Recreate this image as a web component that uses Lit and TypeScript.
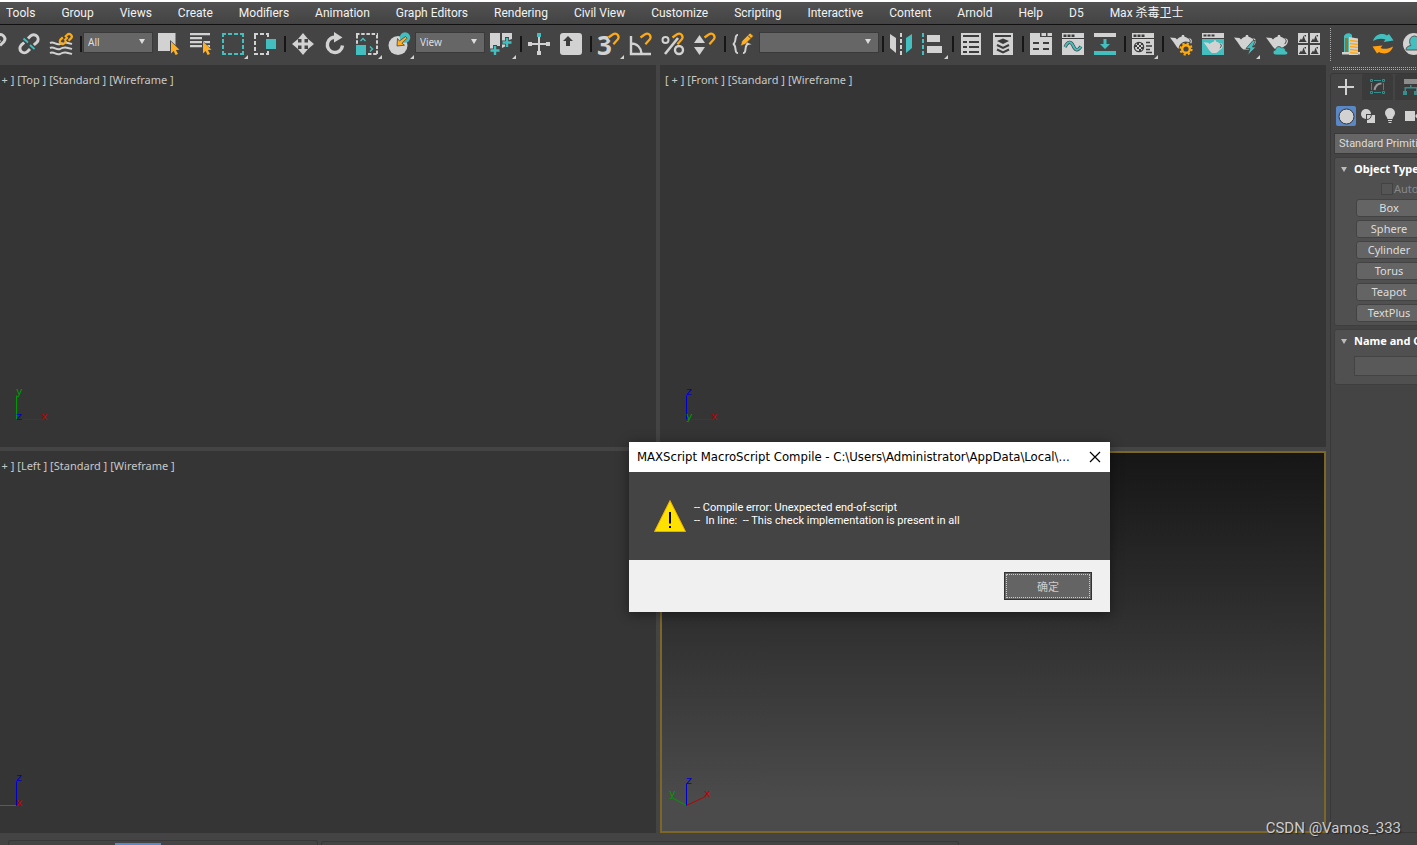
import { LitElement, html, svg, css, TemplateResult, SVGTemplateResult } from "lit";
import { customElement, property } from "lit/decorators.js";

const corner = svg`<path class="l" d="M30 27v4h-4z"/>`;
const cursor = svg`<path class="o" d="M17 13.5l8.5 8.2-3.6.2 2.1 4-2.4 1.1-2-4.1-2.6 2.5z"/>`;
const magnet = svg`<path class="so" stroke-width="2.2" d="M14.5 9.5l4.2-3c4.300-2.600 7.600 2.200 4.700 5.300l-4 4.400"/>`;
const teapot = svg`<path class="l" d="M4 9.500l5.500.5 1.500 1.500c1.500-1.800 3-2.500 4.500-2.700l.5-1.800h2l.5 1.800c1.500.3 2.800.9 3.800 1.900 2.800-.8 4.200 1.300 3.400 3.900-.6 2-2 3.300-3.700 3.900-1.200 1.600-2.500 2.500-3.500 3h-5c-3.500-2.500-4.500-6-9.500-12z"/><path class="sd" stroke-width="1" d="M23 11.500c1.800-.2 1.500 3.200-.4 4.600"/>`;
const picture = (x: number, y: number) => svg`<path class="l" d="M${x} ${y}h10v10h-10z"/><path class="d" d="M${x + 1} ${y + 8.500}l2-3 1 1.500 1.500-4.500 2 5 1 1v.5h-7.500zM${x + 6.500} ${y + 2}h1.500v1.500h-1.500z"/>`;

const ICONS: Record<string, SVGTemplateResult> = {
  link: svg`<path class="sl" stroke-width="3" d="M12 11l4-3.500a4.300 4.300 0 0 1 6 6l-4 4M17 21l-4 3a4.300 4.300 0 0 1-6-6l3-3M11 19l7-7"/>`,
  unlink: svg`<path class="sl" stroke-width="3" d="M14 10.500l2.500-2.500a4.400 4.400 0 0 1 6.300 6.300l-3 2.700M16 21l-2.500 2.500a4.400 4.400 0 0 1-6.300-6.300l3-2.700"/><path class="st" stroke-width="1.800" d="M9.500 10.500l4.500 4M16 17l4.500 4.200"/>`,
  bind: svg`<path class="sl" stroke-width="2" d="M4 15c4-2 6 2.500 10 1 4-2.500 7-1.500 12 0M4 20c4-2 6 2.500 10 1 4-2.500 7-1.500 12 0M4 25c4-2 6 2.500 10 1 4-2.500 7-1.500 12 0"/><path stroke="#444" stroke-width="6" d="M16 14l6-7"/><path class="so" stroke-width="2.200" d="M19 9l2.200-2.200a2.600 2.600 0 0 1 3.800 3.600l-2.500 2.300M20.500 12.800l-2.200 2.400a2.600 2.600 0 0 1-3.800-3.600l2.300-2.200M18.300 12.500l3.400-3.200"/>`,
  select: svg`<path class="l" d="M4 5h17.500v18h-17.500z"/><path class="g" d="M16 12l11 10-3 1 1 5h-3l-2-2-4 2z"/>${cursor}`,
  byName: svg`<path class="l" d="M4 5h20v2.300h-20zM4 9h12v2.300h-12zM4 13h20v2.300h-20zM4 17h20v2.300h-20z"/><path class="g" d="M16 12l9 9v6h-5l-4 0z"/>${cursor}`,
  region: svg`<path class="st" stroke-width="2" stroke-dasharray="4 2" d="M4 6h22M4 26h22M5 5v22M25 5v22"/>${corner}`,
  crossing: svg`<path class="sl" stroke-width="2" stroke-dasharray="4 2" d="M4 6h15M4 26h15M5 7v20M18 5v4M18 23v4"/><path class="t" d="M16 11h10v10h-10z"/>`,
  move: svg`<path class="l" d="M15 5l5 6h-3.500v3.500H20V11l6 5-6 5v-3.500h-3.500V21H20l-5 6-5-6h3.500v-3.500H10V21l-6-5 6-5v3.500h3.500V11H10z"/>`,
  rotate: svg`<path class="sl" stroke-width="3.400" d="M17 9.500a7.600 7.600 0 1 0 5.500 8"/><path class="l" d="M14 4l8.500 5.500-8.500 5z"/>`,
  scale: svg`<path class="sl" stroke-width="2" stroke-dasharray="3.500 1.700" d="M4 6h22M25 7v20M5 7v9M16 26h9"/><path class="t" d="M4 17h10v10h-10z"/><path class="st" stroke-width="1.500" d="M8.500 13l2.500-2.500 2.500 2.500M18 18.500l2.500 2.500-2.500 2.500"/>${corner}`,
  place: svg`<circle class="l" cx="14" cy="17.500" r="9.500"/><circle class="t" cx="21" cy="9.500" r="5.200"/><path class="o" stroke="#444" stroke-width=".8" d="M21.500 8.500l1.500 1.700-5 5 2.500 2-7.500.8.500-7.500 2 2.500z"/>${corner}`,
  pivot: svg`<path class="l" d="M4 5h10v13h-4l-3 4h-3zM16 5h10v6l-3 1-3 6-4 2z"/><path stroke="#444" stroke-width="4" d="M9 17v11M3 22.500h12M21 9v11M15 14.500h12"/><path class="st" stroke-width="2.400" d="M9 18v9M4.500 22.500h9M21 10v9M16.500 14.500h9"/>${corner}`,
  manipulate: svg`<path class="sl" stroke-width="2" d="M15 9v15M5 16h20"/><path class="l" d="M4 14h4v4h-4zM22 14h4v4h-4zM13 23h4v4h-4z"/><path class="t" d="M13 5h4v4h-4z"/>`,
  keyboard: svg`<rect class="l" x="4" y="5" width="22" height="22" rx="3"/><path class="d" d="M12 8l5 5h-3v5h-4v-5h-3z"/>`,
  snap: svg`<text class="glyph" x="3" y="27">3</text><path stroke="#444" stroke-width="4" fill="none" d="M15 11l5-3.500M18 16l4-4"/>${magnet}${corner}`,
  angle: svg`<path class="sl" stroke-width="2.400" d="M5 8v18h20M5 15.500c6 0 10 4 10.500 10"/>${magnet}`,
  percent: svg`<circle class="sl" stroke-width="2" cx="7.500" cy="12" r="3"/><circle class="sl" stroke-width="2.400" cx="21" cy="22" r="4"/><path class="sl" stroke-width="2.600" d="M7 26L20 10"/>${magnet}`,
  spinner: svg`<path class="l" d="M9.500 7l5.500 8h-11zM4 19h11l-5.500 8z"/>${magnet}`,
  edit: svg`<path class="sl" stroke-width="2" d="M10 7c-4-.5-1 8-5 9 4 1 1 9.500 5 9M15 25c4 .5 1-8 5-9-3-1-2-3-2-5"/><path class="o" stroke="#444" stroke-width=".6" d="M12.500 18l1.500-5 8-8 3.500 3-8 8z"/><path class="sd" d="M20 7.500l3 3"/>`,
  mirror: svg`<path class="l" d="M4 6l6 4v15l-6-5z"/><path class="t" d="M26 6l-6 4v15l6-5z"/><path class="sl" stroke-width="2" stroke-dasharray="4 2" d="M15 5v22"/>`,
  align: svg`<path class="st" stroke-width="2" stroke-dasharray="4 2" d="M5 5v22"/><path class="l" d="M9 7h13v7h-13zM9 18h15v7h-15z"/>${corner}`,
  sceneList: svg`<path class="l" d="M5 5h20v22h-20z"/><path class="sd" stroke-width="2" d="M7 8h16M7 14h4M13 14h10M7 19h4M13 19h10M7 24h4M13 24h10"/>`,
  layers: svg`<path class="l" d="M5 5h20v22h-20z"/><path class="sd" stroke-width="2" d="M7 8h16"/><path class="d" d="M15 10.500l6 2.500-6 3-6-3z"/><path class="sd" stroke-width="2" d="M9 17l6 3 6-3M9 21.500l6 3 6-3"/>`,
  ribbon: svg`<path class="l" d="M4 5h10v4h12v18h-22zM15.500 5h4.500v3h-4.500zM21.500 5h4.500v3h-4.500z"/><path class="sd" stroke-width="2" d="M7 15h6M17 15h6M7 21h6M17 21h6"/>`,
  curve: svg`<path class="l" d="M4 5h22v22h-22z"/><path class="d" d="M5.500 6.500h3v2.500h-3zM9.500 6.500h3v2.500h-3zM13.500 6.500h3v2.500h-3zM4 10h22v1h-22z"/><path class="sd" stroke-width="3.200" d="M7 19c3-6 6-6 8-1.500s4 6.500 8 1"/><path class="st" stroke-width="2" d="M7 19c3-6 6-6 8-1.500s4 6.500 8 1"/>`,
  schematic: svg`<path class="l" d="M4 5h22v4h-22z"/><path class="t" d="M4 23h22v4h-22zM13.500 11h3v5h3.500l-5 5-5-5h3.500z"/>`,
  material: svg`<path class="l" d="M4 5h22v22h-22z"/><path class="d" d="M5.500 6.500h3v2.500h-3zM9.500 6.500h3v2.500h-3zM13.500 6.500h3v2.500h-3zM4 10h22v1h-22z"/><circle class="sd" cx="11" cy="19" r="4.600" stroke-width="1.300"/><path class="d" d="M9 15h2v2h-2zM13 15h2v2h-2zM11 17h2v2h-2zM7 17h2v2h-2zM9 19h2v2h-2zM13 19h2v2h-2zM11 21h2v2h-2z"/><path class="sd" stroke-width="1.600" d="M18 14.500h4M18 18h6M18 21.500h4M18 24.500h6"/>${corner}`,
  renderSetup: svg`${teapot}<circle cx="20" cy="21" r="7.500" fill="#444"/><circle class="so" cx="20" cy="21" r="3.800" stroke-width="2.400"/><circle class="so" cx="20" cy="21" r="5.600" stroke-width="2" stroke-dasharray="2.200 2.200"/>`,
  frame: svg`<path class="l" d="M4 5h22v5h-22z"/><path class="d" d="M5.500 6.500h3v2h-3zM9.500 6.500h3v2h-3zM13.500 6.500h3v2h-3z"/><path class="t" d="M4 11h22v16h-22z"/><g transform="translate(2 6) scale(.88)">${teapot}</g>`,
  render: svg`${teapot}<path class="t" stroke="#444" stroke-width=".8" d="M23 12.500l-7 8h4l-2.500 7 8.500-8.500h-3.500l3-6.500z"/>${corner}`,
  cloud: svg`${teapot}<path class="t" stroke="#444" stroke-width=".8" d="M14 27c-4-.5-3.500-5-.5-5 .2-3.500 4.500-4.500 6-2 3-1 4 1 4 3 3 .2 3 4-.5 4z"/>`,
  gallery: svg`${picture(4, 5)}${picture(16, 5)}${picture(4, 17)}${picture(16, 17)}`,
  building: svg`<path class="t" d="M9 8c1-3 6-4 8-1v19h-8z"/><path fill="#8a7a35" d="M10 10h3v16h-3z"/><path class="l" d="M14 9l9 1.500v16.500h-9zM7 24h18v2.500h-18z"/><path stroke="#ffa81c" stroke-width="1.600" d="M15 12.500l8 1M15 15.500l8 1M15 18.500l8 1M15 21.500l8 1M15 24.500l8 1"/>`,
  sync: svg`<path class="t" d="M6 13c2-7 9-8.500 14-5.500l2-1.500 4.500 6.500-10 1.500 2-2.500c-4-1.500-8-1-12.500 1.500z"/><path class="or" d="M26 18.500c-2 7-9 8.500-14 5.500l-2 1.500-4.500-7 10-1-2 2.500c4 1.500 8 1 12.500-1.500z"/>`,
  account: svg`<circle class="l" cx="15" cy="16" r="11"/><path class="t" stroke="#555" d="M7 22c0-3 2-4 5-4.500-2-2-2.500-9 3.500-9.500 5.500.5 5 7.500 3 9.500 3 .5 5 1.500 5 4.500z"/>`,
};

const MENUS = ["Tools", "Group", "Views", "Create", "Modifiers", "Animation", "Graph Editors", "Rendering", "Civil View", "Customize", "Scripting", "Interactive", "Content", "Arnold", "Help", "D5", "Max 杀毒卫士"];

type Tool = string | { value: string; label: string; wide?: boolean };
const GROUPS: Tool[][] = [
  ["link", "unlink", "bind"],
  [{ value: "All", label: "Selection filter" }, "select", "byName", "region", "crossing"],
  ["move", "rotate", "scale", "place", { value: "View", label: "Reference coordinate system" }, "pivot"],
  ["manipulate", "keyboard"],
  ["snap", "angle", "percent", "spinner"],
  ["edit", { value: "", label: "Named selection sets", wide: true }],
  ["mirror", "align"],
  ["sceneList", "layers"],
  ["ribbon", "curve", "schematic"],
  ["material"],
  ["renderSetup", "frame", "render", "cloud", "gallery"],
];

const base = css`
  * { box-sizing: border-box; }
  button, select, input { font: inherit; color: inherit; margin: 0; border-radius: 0; }
  button { background: none; border: 0; padding: 0; }
  svg { display: block; }
`;

@customElement("menu-bar")
class MenuBar extends LitElement {
  static styles = [base, css`
    :host { display: block; border-top: 2px solid #fff; background: linear-gradient(#525252, #434343); border-bottom: 1px solid #111; }
    .menu { display: flex; gap: 26px; height: 22px; padding-left: 6px; align-items: center; color: #f2f2f2; font: 12px/20px Roboto, "Noto Sans CJK SC", sans-serif; }
    .menu button { white-space: nowrap; }
  `];
  render() {
    return html`<nav class="menu">${MENUS.map((m) => html`<button>${m}</button>`)}</nav>`;
  }
}

@customElement("tool-bar")
class ToolBar extends LitElement {
  static styles = [base, css`
    :host { display: block; overflow: hidden; background: #444; }
    .bar { display: flex; height: 40px; margin-left: -18px; padding-top: 3px; }
    .group { display: flex; flex: none; }
    .group + .group::before { content: ""; width: 2px; height: 16px; margin: 8px 2px 0; background: #161616; }
    .grip { flex: none; width: 3px; height: 34px; margin: 0 3px; background: conic-gradient(#aaa 25%, #444 0) 0 0 / 2px 2px; }
    .tool { width: 32px; height: 32px; }
    .tool svg { overflow: visible; }
    .combo { position: relative; width: 68px; height: 19px; margin: 4px 2px 4px 0; }
    .wide { width: 118px; }
    .combo select { appearance: none; width: 100%; height: 19px; border: 0; outline: 1px solid #3a3a3a; background: #666; padding: 0 4px; color: #ddd; font: 10px/19px "Noto Sans", sans-serif; }
    .combo svg { position: absolute; right: 7px; top: 7px; fill: #ddd; pointer-events: none; }
    .l { fill: #d2d2d2; } .t { fill: #43bfbf; } .o { fill: #ffb022; } .or { fill: #ff9f10; } .d { fill: #3c3c3c; } .g { fill: #444; }
    .sl, .st, .so, .sd { fill: none; }
    .sl { stroke: #d2d2d2; } .st { stroke: #43bfbf; } .so { stroke: #ffab10; } .sd { stroke: #3c3c3c; }
    .glyph { fill: #d2d2d2; font: bold 26px "Noto Sans", sans-serif; }
  `];
  private tool(t: Tool): TemplateResult {
    if (typeof t === "string") {
      return html`<button class="tool" aria-label=${t}><svg width="32" height="32" viewBox="0 0 32 32">${ICONS[t]}</svg></button>`;
    }
    return html`<div class="combo ${t.wide ? "wide" : ""}">
      <select aria-label=${t.label}><option>${t.value}</option></select>
      <svg width="6" height="5" viewBox="0 0 6 5"><path d="M0 0h6l-3 5z"/></svg>
    </div>`;
  }
  render() {
    return html`<div class="bar">
      ${GROUPS.map((g) => html`<div class="group">${g.map((t) => this.tool(t))}</div>`)}
      <div class="grip"></div>
      <div class="group">${["building", "sync", "account"].map((t) => this.tool(t))}</div>
    </div>`;
  }
}

interface Axis { name: string; color: string; dx: number; dy: number; tx: number; ty: number; }
const RED = "#c00000", GREEN = "#009a00", BLUE = "#0000c8";
const AXES: Record<string, Axis[]> = {
  Top: [
    { name: "x", color: RED, dx: 27, dy: 0, tx: 25, ty: 1 },
    { name: "y", color: GREEN, dx: 0, dy: -24, tx: 0, ty: -24 },
    { name: "z", color: BLUE, dx: 0, dy: 0, tx: 0, ty: 1 },
  ],
  Front: [
    { name: "x", color: RED, dx: 27, dy: 0, tx: 25, ty: 1 },
    { name: "z", color: BLUE, dx: 0, dy: -24, tx: 0, ty: -24 },
    { name: "y", color: GREEN, dx: 0, dy: 0, tx: 0, ty: 1 },
  ],
  Left: [
    { name: "", color: GREEN, dx: -24, dy: 0, tx: 0, ty: 0 },
    { name: "z", color: BLUE, dx: 0, dy: -24, tx: 0, ty: -24 },
    { name: "x", color: RED, dx: 0, dy: 0, tx: 0, ty: 1 },
  ],
  Perspective: [
    { name: "x", color: RED, dx: 19, dy: -9, tx: 18, ty: -8 },
    { name: "y", color: GREEN, dx: -15, dy: -8, tx: -17, ty: -8 },
    { name: "z", color: BLUE, dx: 0, dy: -22, tx: 0, ty: -21 },
  ],
};

@customElement("view-port")
class ViewPort extends LitElement {
  @property() name = "Top";
  @property({ type: Boolean }) active = false;
  static styles = [base, css`
    :host { display: flex; flex-direction: column; justify-content: space-between; min-width: 0; min-height: 0; overflow: hidden; background: #353535; }
    :host([active]) { border: 2px solid #7d6727; background: linear-gradient(#161616, #4b4b4b 92%); }
    .labels { display: flex; gap: 3px; padding: 6px 5px; color: #c8c8c8; font: 11px/18px "Noto Sans", sans-serif; }
    .labels button { white-space: nowrap; }
    .gizmo { margin: auto 0 0; overflow: visible; }
    :host([edge]) .labels { margin-left: -10px; }
    :host([edge]) .gizmo { margin-left: -10px; }
    :host([active]) .gizmo { margin-left: -2px; margin-bottom: -2px; }
    .axis { font: 11px "DejaVu Sans", sans-serif; }
  `];
  render() {
    return html`
      ${this.active ? "" : html`<div class="labels">
        <button>[ + ]</button><button>[${this.name} ]</button><button>[Standard ]</button><button>[Wireframe ]</button>
      </div>`}
      <svg class="gizmo" width="60" height="60" viewBox="0 0 60 60">
        ${AXES[this.name].map((a) => svg`
          <path stroke=${a.color} d="M26.500 ${32.500}l${a.dx} ${a.dy}"/>
          <text class="axis" fill=${a.color} x=${26 + a.tx} y=${32 + a.ty}>${a.name}</text>`)}
      </svg>`;
  }
}

@customElement("command-panel")
class CommandPanel extends LitElement {
  static styles = [base, css`
    :host { display: block; overflow: hidden; background: #444; color: #ddd; font: 11px/14px "Noto Sans", sans-serif; }
    .inner { width: 180px; height: 100%; margin-left: 4px; display: flex; flex-direction: column; }
    .grip { flex: none; height: 3px; margin: 2px 0 3px 2px; background: conic-gradient(#aaa 25%, #444 0) 0 0 / 2px 2px; }
    .body { flex: 1; border: 1px solid #383838; border-top-left-radius: 3px; padding-left: 3px; }
    .tabs { display: flex; gap: 2px; margin-left: -3px; }
    .tab { width: 31px; height: 26px; background: #3b3b3b; border-radius: 3px 3px 0 0; display: grid; place-items: center; }
    .current { background: #444; width: 29px; }
    .kinds { display: flex; gap: 2px; padding: 6px 0 7px 2px; }
    .kind { width: 20px; height: 20px; display: grid; place-items: center; border-radius: 2px; }
    .on { background: #5a87c5; }
    .family { appearance: none; display: block; width: 170px; height: 21px; border: 1px solid #3a3a3a; background: #666; padding: 1px 4px 0; font: 11px/18px Roboto, sans-serif; }
    .rollout { width: 170px; margin-top: 3px; border: 1px solid #3e3e3e; border-radius: 3px; background: #505050; padding: 3px 0 3px; }
    .head { display: flex; align-items: center; gap: 7px; padding-left: 6px; height: 16px; color: #fff; font-weight: bold; white-space: nowrap; }
    .auto { display: flex; align-items: center; gap: 1px; height: 18px; margin: 3px 0 1px 46px; color: #888; }
    .auto input { appearance: none; width: 12px; height: 12px; border: 1px solid #434343; background: #555; }
    .types { display: grid; grid-template-columns: 66px 66px; gap: 3px 6px; padding-left: 21px; }
    .type { height: 18px; border: 1px solid #434343; border-radius: 3px; background: #646464; line-height: 16px; }
    .name { display: block; width: 110px; height: 20px; margin: 7px 0 5px 19px; border: 1px solid #434343; background: #595959; }
    .l { fill: #d2d2d2; } .dim { fill: #8c8c8c; } .tri { fill: #bbb; }
  `];
  private head(text: string) {
    return html`<button class="head"><svg width="6" height="5"><path class="tri" d="M0 0h6l-3 5z"/></svg>${text}</button>`;
  }
  render() {
    return html`<div class="inner">
      <div class="grip"></div>
      <div class="body">
        <div class="tabs">
          <button class="tab current" aria-label="Create"><svg width="18" height="18"><path class="l" d="M8 1h2v7h7v2h-7v7h-2v-7h-7v-2h7z"/></svg></button>
          <button class="tab" aria-label="Modify"><svg width="18" height="18" fill="none" stroke="#358f8f"><path d="M1.500 1.500h2v2h-2zM13.500 1.500h2v2h-2zM1.500 13.500h2v2h-2zM13.500 13.500h2v2h-2zM5 2.500h7M5 14.500h7M2.500 5v7M14.500 5v7"/><path stroke="#999" stroke-width="2" d="M5.500 12c1-5 3-6.500 7-6.500"/></svg></button>
          <button class="tab" aria-label="Hierarchy"><svg width="18" height="18"><path class="dim" d="M2 1h13v5h-13z"/><path fill="#358f8f" d="M8 7h1.500v2h6v4h-1.500v-2.500h-10v2.500h-1.500v-4h5.500zM1 13h4v4h-4zM12 13h4v4h-4z"/></svg></button>
        </div>
        <div class="kinds">
          <button class="kind on" aria-label="Geometry"><svg width="18" height="18"><circle class="l" cx="9.500" cy="9.500" r="7.500" stroke="#333"/></svg></button>
          <button class="kind" aria-label="Shapes"><svg width="18" height="18"><circle class="l" cx="7" cy="7" r="5"/><path fill="#444" d="M7 7h9v9h-9z"/><path class="l" d="M8 8h8v8h-8z"/><path fill="none" stroke="#444" d="M8 12.500c3 0 4-2 4.500-5"/></svg></button>
          <button class="kind" aria-label="Lights"><svg width="18" height="18"><path class="l" d="M9 1a5 5 0 0 0-5 5c0 2.500 2 3.500 2.500 6h5c.5-2.500 2.500-3.500 2.500-6a5 5 0 0 0-5-5zM7 13h4v1h-4zM7.500 15h3v1h-3z"/></svg></button>
          <button class="kind" aria-label="Cameras"><svg width="18" height="18"><path class="l" d="M2 4h10v10h-10zM12.500 8l4-3v8l-4-3z"/></svg></button>
        </div>
        <select class="family" aria-label="Category"><option>Standard Primitives</option></select>
        <div class="rollout">
          ${this.head("Object Type")}
          <label class="auto"><input type="checkbox" disabled>AutoGrid</label>
          <div class="types">
            ${["Box", "Cone", "Sphere", "GeoSphere", "Cylinder", "Tube", "Torus", "Pyramid", "Teapot", "Plane", "TextPlus"].map((t) => html`<button class="type">${t}</button>`)}
          </div>
        </div>
        <div class="rollout">
          ${this.head("Name and Color")}
          <input class="name" aria-label="Object name">
        </div>
      </div>
    </div>`;
  }
}

@customElement("error-dialog")
class ErrorDialog extends LitElement {
  static styles = [base, css`
    :host { display: block; box-shadow: 0 2px 12px rgba(0, 0, 0, .45); background: #444; }
    .title { display: flex; align-items: center; justify-content: space-between; height: 30px; padding: 0 9px 0 8px; background: #fff; color: #000; font: 13px/30px "DejaVu Sans Condensed", "DejaVu Sans", sans-serif; }
    .close { width: 12px; height: 12px; }
    .body { display: flex; align-items: center; gap: 8px; height: 88px; padding-left: 25px; color: #fff; }
    .message { margin: 0 0 4px; white-space: pre; font: 11px/13px Roboto, sans-serif; }
    .foot { display: flex; justify-content: flex-end; align-items: center; height: 52px; padding-right: 18px; background: #f0f0f0; }
    .ok { width: 88px; height: 28px; padding: 1px; border: 1px solid #333; background: #646464; color: #ccc; font: 11px/22px "Noto Sans CJK SC", sans-serif; }
    .focus { display: block; border: 1px dotted #ccc; }
  `];
  render() {
    return html`<div role="dialog" aria-labelledby="t">
      <div class="title"><span id="t">MAXScript MacroScript Compile - C:\\Users\\Administrator\\AppData\\Local\\...</span>
        <button class="close" aria-label="Close"><svg width="12" height="12" stroke="#000" stroke-width="1.200"><path d="M1 1l10 10M11 1l-10 10"/></svg></button></div>
      <div class="body">
        <svg width="32" height="34" viewBox="0 0 32 34"><path fill="#ffe100" stroke="#f0a800" d="M16 1.500L31.500 32.500H.5z"/><path d="M15 13h2v11.500h-2zM15 27h2v2h-2z"/></svg>
        <p class="message">-- Compile error: Unexpected end-of-script
--  In line:  -- This check implementation is present in all</p>
      </div>
      <div class="foot"><button class="ok"><span class="focus">确定</span></button></div>
    </div>`;
  }
}

@customElement("app-root")
class AppRoot extends LitElement {
  static styles = [base, css`
    :host { position: relative; display: flex; flex-direction: column; height: 100vh; overflow: hidden; background: #444; }
    .main { flex: 1; min-height: 0; display: flex; }
    .views { flex: 1; min-width: 0; display: grid; grid-template: 1fr 1fr / 656fr 666fr; gap: 4px; }
    .panel { flex: 0 0 91px; }
    .status { flex: none; display: flex; align-items: flex-end; gap: 3px; height: 12px; padding-left: 8px; overflow: hidden; }
    .box { height: 5px; border: 1px solid #383838; border-bottom: 0; border-radius: 3px 3px 0 0; }
    .time { flex: 0 0 310px; padding: 2px 0 0 106px; }
    .track { flex: 0 0 638px; height: 4px; }
    .slider { width: 46px; height: 2px; background: #5a87c5; }
    .dialog { position: absolute; left: 629px; top: 442px; width: 481px; }
    .mark { position: absolute; right: 16px; bottom: 8px; color: #ccc; font: 15px/18px Roboto, sans-serif; text-shadow: 1px 1px 1px #222; }
  `];
  render() {
    return html`
      <menu-bar></menu-bar>
      <tool-bar></tool-bar>
      <div class="main">
        <div class="views">
          <view-port name="Top" edge></view-port>
          <view-port name="Front"></view-port>
          <view-port name="Left" edge></view-port>
          <view-port name="Perspective" active></view-port>
        </div>
        <command-panel class="panel"></command-panel>
      </div>
      <div class="status"><div class="box time"><div class="slider"></div></div><div class="box track"></div></div>
      <error-dialog class="dialog"></error-dialog>
      <div class="mark">CSDN @Vamos_333</div>`;
  }
}
